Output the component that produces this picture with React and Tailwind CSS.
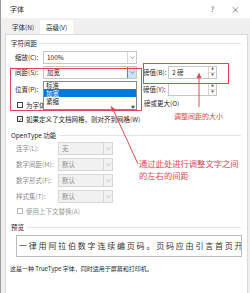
import React from "react";

const Chevron = ({ color = "#6b6b6b" }) => (
  <svg width="5" height="3" viewBox="0 0 6 4">
    <path d="M0.5 0.5 L3 3.2 L5.5 0.5" fill="none" stroke={color} strokeWidth="0.9" />
  </svg>
);

const Check = () => (
  <svg width="5" height="5" viewBox="0 0 6 6">
    <path d="M0.8 3.2 L2.4 4.8 L5.2 1.2" fill="none" stroke="#333" strokeWidth="0.9" />
  </svg>
);

function Combo({ value, width, disabled, focus }) {
  return (
    <div
      className={`flex h-[13px] items-stretch border ${
        disabled ? "border-[#d6d6d6] bg-[#f1f1f1]" : "border-[#c6c6c6] bg-white"
      }`}
      style={{ width }}
    >
      <div className={`flex flex-1 items-center pl-[3px] ${disabled ? "text-[#8a8a8a]" : ""}`}>{value}</div>
      <div
        className={`flex w-[9px] items-center justify-center border-l ${
          focus ? "border-[#3c8fd8] bg-[#cce4f7]" : "border-[#d6d6d6]"
        }`}
      >
        <Chevron color={disabled ? "#a8a8a8" : "#6b6b6b"} />
      </div>
    </div>
  );
}

function Spin({ value }) {
  return (
    <div className="flex h-[13px] w-[49px] items-stretch border border-[#c6c6c6] bg-white">
      <div className="flex flex-1 items-center pl-[3px]">{value}</div>
      <div className="flex w-[8px] flex-col border-l border-[#d6d6d6] text-[3px] leading-none text-[#555]">
        <div className="flex flex-1 items-center justify-center border-b border-[#e2e2e2]">▲</div>
        <div className="flex flex-1 items-center justify-center">▼</div>
      </div>
    </div>
  );
}

function Box({ checked, disabled }) {
  return (
    <div
      className={`flex h-[6px] w-[6px] items-center justify-center border bg-white ${
        disabled ? "border-[#b8b8b8]" : "border-[#444]"
      }`}
    >
      {checked && <Check />}
    </div>
  );
}

function Group({ title }) {
  return (
    <div className="flex h-[10px] items-center gap-[3px] pl-[5px] pr-[6px]">
      <span>{title}</span>
      <div className="h-px flex-1 bg-[#e3e3e3]" />
    </div>
  );
}

const openType = [
  ["连字(L):", "无"],
  ["数字间距(M):", "默认"],
  ["数字形式(F):", "默认"],
  ["样式集(T):", "默认"],
];

export default function App() {
  return (
    <div className="relative h-[293px] w-[250px] overflow-hidden border-l border-[#9c9c9c] bg-[#f0f0f0] font-['Noto_Sans_CJK_SC','Noto_Sans',sans-serif] text-[6.5px] leading-none text-[#1f1f1f]">
      {/* title bar */}
      <div className="flex h-[18px] items-center justify-between bg-white pl-[9px] pr-[10px]">
        <span className="text-[7px]">字体</span>
        <div className="flex items-center gap-[17px] text-[#555]">
          <span className="text-[7px]">?</span>
          <span className="text-[9px] font-light">×</span>
        </div>
      </div>

      {/* tabs */}
      <div className="flex h-[16px] items-end pl-[5px]">
        <div className="flex h-[14px] items-center px-[6px]">字体(N)</div>
        <div className="flex h-[14px] items-center bg-white px-[6px]">高级(V)</div>
      </div>

      {/* panel */}
      <div className="ml-[4px] mr-[2px] flex h-[260px] flex-col border border-b-0 border-[#dadada] bg-white">
        <div className="mt-[3px]">
          <Group title="字符间距" />
        </div>

        <div className="mt-[3px] flex h-[13px] items-center pl-[9px]">
          <span className="w-[28px]">缩放(C):</span>
          <Combo value="100%" width={94} />
        </div>

        <div className="mt-[2px] flex h-[13px] items-center pl-[9px]">
          <span className="w-[28px]">间距(S):</span>
          <Combo value="加宽" width={94} focus />
          <span className="ml-[6px] w-[25px]">磅值(B):</span>
          <Spin value="2 磅" />
        </div>

        <div className="mt-[4px] flex h-[13px] items-center pl-[9px]">
          <span className="w-[28px]">位置(P):</span>
          <Combo value="" width={94} />
          <span className="ml-[6px] w-[25px]">磅值(Y):</span>
          <Spin value="" />
        </div>

        <div className="mt-[4px] flex h-[10px] items-center pl-[11px]">
          <Box />
          <span className="ml-[3px] w-[115px]">为字体调整字间距(K):</span>
          <span className="-mt-[3px] ml-[3px]">磅或更大(O)</span>
        </div>

        <div className="mt-[4px] flex h-[10px] items-center pl-[11px]">
          <Box checked />
          <span className="ml-[3px]">如果定义了文档网格，则对齐到网格(W)</span>
        </div>

        <div className="mt-[6px]">
          <Group title="OpenType 功能" />
        </div>

        <div className="mt-[2px] flex flex-col gap-[3px]">
          {openType.map(([label, value]) => (
            <div key={label} className="flex h-[13px] items-center pl-[10px] text-[#8a8a8a]">
              <span className="w-[42px]">{label}</span>
              <Combo value={value} width={55} disabled />
            </div>
          ))}
        </div>

        <div className="mt-[3px] flex h-[10px] items-center pl-[11px] text-[#9a9a9a]">
          <Box disabled />
          <span className="ml-[3px]">使用上下文替换(A)</span>
        </div>

        <div className="mt-[6px]">
          <Group title="预览" />
        </div>

        <div className="ml-[10px] mr-[5px] mt-[3px] flex h-[22px] items-center overflow-hidden whitespace-nowrap border border-[#bcbcbc] pl-[2px] text-[8px] tracking-[1.8px] text-[#333]">
          一律用阿拉伯数字连续编页码。页码应由引言首页开始
        </div>

        <div className="mt-[7px] flex h-[10px] items-center pl-[4px] text-[6px]">
          这是一种 TrueType 字体，同时适用于屏幕和打印机。
        </div>
      </div>

      {/* open spacing list */}
      <div className="absolute left-[42px] top-[81px] flex h-[29px] w-[94px] flex-col border border-[#8a8a8a] bg-white">
        <div className="flex h-[8px] items-center pl-[2px]">标准</div>
        <div className="flex h-[8px] items-center bg-[#0078d7] pl-[2px] text-white">加宽</div>
        <div className="flex h-[9px] items-center pl-[2px]">紧缩</div>
        <div className="flex flex-1 items-end justify-end pr-[1px] text-[4px] text-[#444]">▼</div>
      </div>

      {/* annotations */}
      <div className="absolute left-[9px] top-[68px] h-[43px] w-[132px] border border-[#e2474f]" />
      <div className="absolute left-[142px] top-[63px] h-[21px] w-[86px] border border-[#e2474f]" />

      <svg className="absolute left-0 top-0" width="250" height="293" viewBox="0 0 250 293">
        <line x1="198" y1="107" x2="198" y2="76" stroke="#e2474f" strokeWidth="1" />
        <path d="M195.5 78 L198 72.5 L200.5 78 Z" fill="#e2474f" />
        <line x1="137" y1="164" x2="112.5" y2="110.5" stroke="#e2474f" strokeWidth="1" />
        <path d="M109.5 105.5 L115 110 L111.2 111.8 Z" fill="#e2474f" />
      </svg>

      <div className="absolute left-[173px] top-[113px] text-[7px] leading-none text-[#e2474f]">调整间距的大小</div>
      <div className="absolute left-[138px] top-[157px] text-[8.3px] leading-[12px] text-[#e2474f]">
        <div>通过此处进行调整文字之间</div>
        <div>的左右的间距</div>
      </div>
    </div>
  );
}
